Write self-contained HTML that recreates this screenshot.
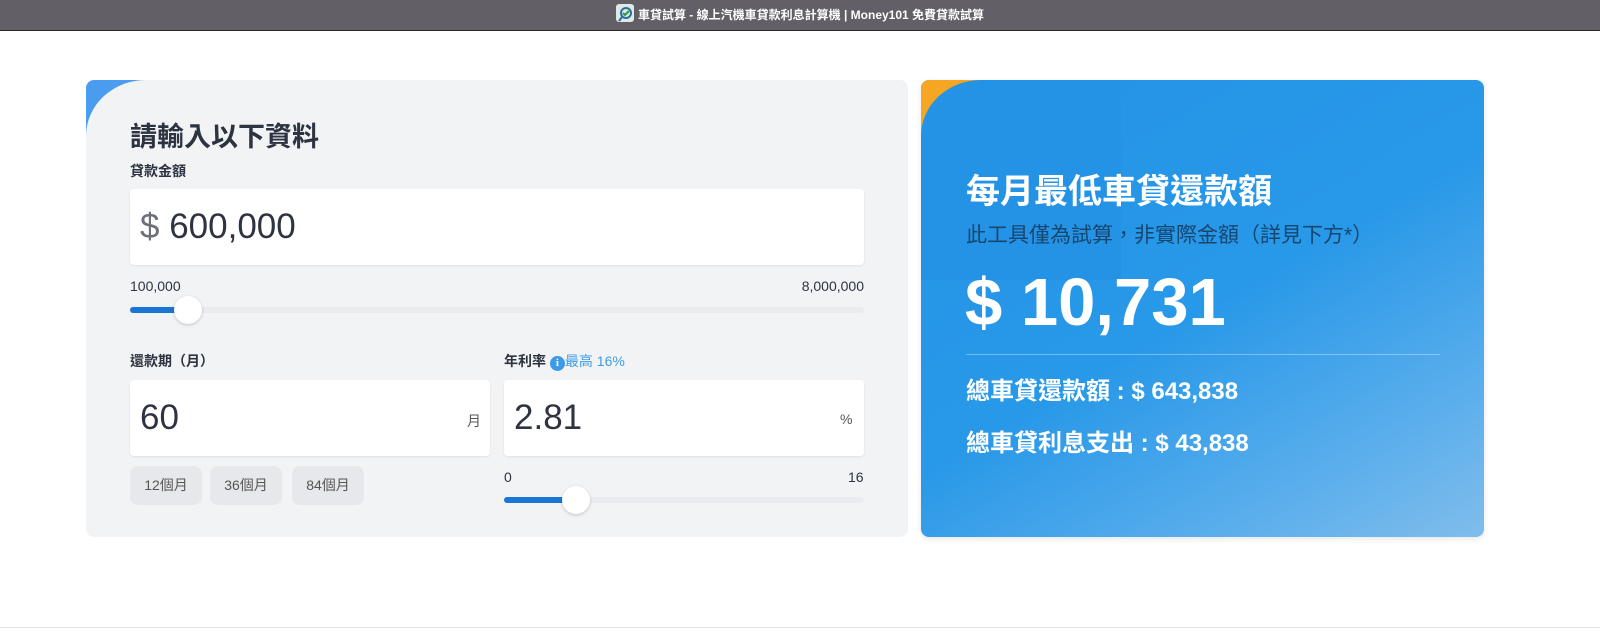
<!DOCTYPE html>
<html><head><meta charset="utf-8"><style>
*{box-sizing:border-box;margin:0;padding:0}
body{width:1600px;height:641px;background:#fff;font-family:"Liberation Sans","Noto Sans CJK TC",sans-serif;position:relative;overflow:hidden;color:#2d3340}
.bar{position:absolute;left:0;top:0;width:1600px;height:31px;background:#626066;border-bottom:1px solid #2a2a2c;color:#fff;font-size:12px;font-weight:bold;text-align:center;line-height:31px}
.bar .ic{display:inline-block;width:18px;height:18px;background:#dfe9e6;border-radius:3px;vertical-align:-4px;margin-right:4px;position:relative}
.abs{position:absolute}
.card{position:absolute;border-radius:8px;overflow:hidden}
.corner{position:absolute;left:0;top:0;width:60px;height:60px}
.cover{position:absolute;left:0;top:0;width:200px;height:200px;border-top-left-radius:60px 56px}
.inp{position:absolute;background:#fff;border-radius:4px;box-shadow:0 1px 2px rgba(0,0,0,.08)}
.lbl{font-size:14px;font-weight:bold;color:#2d3340}
.track{position:absolute;height:6px;border-radius:3px;background:#e9ebee}
.fill{position:absolute;height:6px;border-radius:3px;background:#1976d2}
.thumb{position:absolute;width:28px;height:28px;border-radius:50%;background:#fff;box-shadow:0 1px 3px rgba(0,0,0,.2)}
.btn{position:absolute;top:466px;height:39px;width:72px;background:#e6e8eb;border-radius:8px;font-size:14px;color:#555;text-align:center;line-height:39px}
.w{color:#fff}
</style></head><body>
<div class="bar"><span class="ic"><svg width="18" height="18"><circle cx="10" cy="8" r="5" fill="none" stroke="#2a6fa0" stroke-width="2"/><path d="M7 8l2 2 4-4" stroke="#2a9a40" stroke-width="2" fill="none"/><path d="M6 12l-3 4" stroke="#2a6fa0" stroke-width="2"/></svg></span>車貸試算 - 線上汽機車貸款利息計算機 | Money101 免費貸款試算</div>

<div class="card" style="left:86px;top:80px;width:822px;height:457px;background:#f1f3f5">
<div class="corner" style="background:#4a9cee"></div>
<div class="cover" style="background:#f1f3f5"></div>
</div>
<div class="abs" style="left:130px;top:115px;font-size:27px;font-weight:bold;color:#2d3340">請輸入以下資料</div>
<div class="abs lbl" style="left:130px;top:161px">貸款金額</div>
<div class="inp" style="left:130px;top:189px;width:734px;height:76px"></div>
<div class="abs" style="left:140px;top:207px;font-size:35px;color:#2d3340"><span style="color:#6b7079">$</span> 600,000</div>
<div class="abs" style="left:130px;top:278px;font-size:14px">100,000</div>
<div class="abs" style="left:790px;top:278px;font-size:14px;width:74px;text-align:right">8,000,000</div>
<div class="track" style="left:130px;top:307px;width:734px"></div>
<div class="fill" style="left:130px;top:307px;width:60px"></div>
<div class="thumb" style="left:174px;top:296px"></div>

<div class="abs lbl" style="left:130px;top:351px">還款期（月）</div>
<div class="abs lbl" style="left:504px;top:351px">年利率 <span style="color:#3b9be8;font-weight:normal;font-size:14px"><span style="display:inline-block;width:15px;height:15px;border-radius:50%;background:#3b9be8;color:#fff;font-size:11px;text-align:center;line-height:15px;font-weight:bold;font-family:'Liberation Serif',serif">i</span>最高 16%</span></div>
<div class="inp" style="left:130px;top:380px;width:360px;height:76px"></div>
<div class="abs" style="left:140px;top:398px;font-size:35px">60</div>
<div class="abs" style="left:467px;top:411px;font-size:14px;color:#555">月</div>
<div class="inp" style="left:504px;top:380px;width:360px;height:76px"></div>
<div class="abs" style="left:514px;top:398px;font-size:35px">2.81</div>
<div class="abs" style="left:840px;top:411px;font-size:14px;color:#555">%</div>
<div class="btn" style="left:130px">12個月</div>
<div class="btn" style="left:210px">36個月</div>
<div class="btn" style="left:292px">84個月</div>
<div class="abs" style="left:504px;top:469px;font-size:14px">0</div>
<div class="abs" style="left:848px;top:469px;font-size:14px">16</div>
<div class="track" style="left:504px;top:497px;width:360px"></div>
<div class="fill" style="left:504px;top:497px;width:72px"></div>
<div class="thumb" style="left:562px;top:486px"></div>

<div class="card" style="left:921px;top:80px;width:563px;height:457px;background:linear-gradient(150deg,#2493e6 0%,#2898e8 50%,#5aaeec 80%,#80bdeb 100%);box-shadow:0 2px 6px rgba(0,0,0,.1)">
<div class="corner" style="background:#f5a623"></div>
<div class="cover" style="background:#2493e6"></div>
</div>
<div class="abs w" style="left:966px;top:164px;font-size:34px;font-weight:bold">每月最低車貸還款額</div>
<div class="abs" style="left:966px;top:219px;font-size:21px;color:#17466f">此工具僅為試算，非實際金額（詳見下方*）</div>
<div class="abs w" style="left:965px;top:264px;font-size:67px;font-weight:bold">$ 10,731</div>
<div class="abs" style="left:966px;top:354px;width:474px;height:1px;background:rgba(255,255,255,.35)"></div>
<div class="abs w" style="left:966px;top:371px;font-size:24px;font-weight:bold">總車貸還款額 : $ 643,838</div>
<div class="abs w" style="left:966px;top:423px;font-size:24px;font-weight:bold">總車貸利息支出 : $ 43,838</div>
<div class="abs" style="left:0;top:627px;width:1600px;height:1px;background:#e5e5e5"></div>
</body></html>
